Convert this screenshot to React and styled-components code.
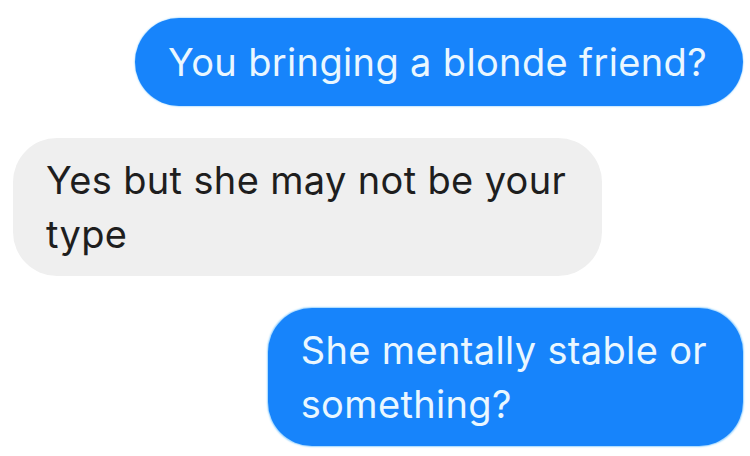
import React from "react";
import styled, { createGlobalStyle } from "styled-components";

const Global = createGlobalStyle`
  html, body {
    margin: 0;
    padding: 0;
    background: #ffffff;
  }
  body {
    font-family: Inter, "Liberation Sans", Arial, sans-serif;
    -webkit-font-smoothing: antialiased;
  }
`;

const Thread = styled.div`
  display: flex;
  flex-direction: column;
  gap: 32px;
  padding: 18px 7px 0 13px;
  width: 750px;
  height: 456px;
  box-sizing: border-box;
  overflow: hidden;
`;

const Bubble = styled.div`
  align-self: ${(p) => (p.$out ? "flex-end" : "flex-start")};
  background: ${(p) => (p.$out ? "#1784fb" : "#efefef")};
  color: ${(p) => (p.$out ? "#eaf7ff" : "#1e1e1e")};
  box-shadow: ${(p) => (p.$out ? "0 0 1.5px 0.5px #9fd6ff" : "none")};
  font-size: 38px;
  line-height: 54px;
  letter-spacing: 0.35px;
  white-space: nowrap;
  padding: ${(p) => (p.$lines > 1 ? "15px" : "17px")} 36px ${(p) => (p.$lines > 1 ? "15px" : "17px")} 33px;
  border-radius: 44px;
`;

export default function App() {
  return (
    <>
      <Global />
      <Thread>
        <Bubble $out $lines={1}>You bringing a blonde friend?</Bubble>
        <Bubble $lines={2}>
          Yes but she may not be your
          <br />
          type
        </Bubble>
        <Bubble $out $lines={2}>
          She mentally stable or
          <br />
          something?
        </Bubble>
      </Thread>
    </>
  );
}
